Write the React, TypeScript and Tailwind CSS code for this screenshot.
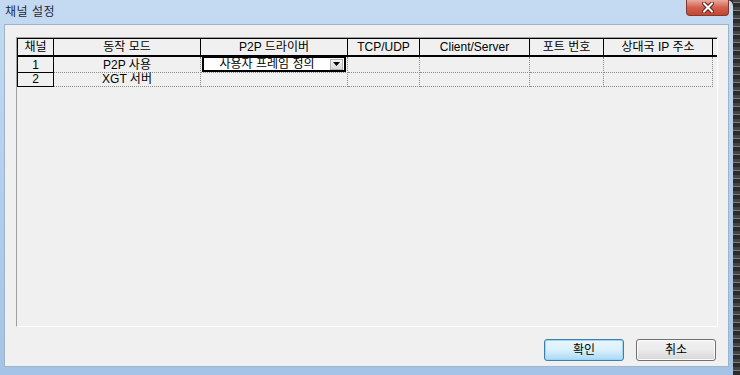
import React from 'react';

const font = "font-['Liberation_Sans','Noto_Sans_CJK_KR',sans-serif]";

const headers = ['채널', '동작 모드', 'P2P 드라이버', 'TCP/UDP', 'Client/Server', '포트 번호', '상대국 IP 주소'];

const rows = [
  { ch: '1', mode: 'P2P 사용', driver: true },
  { ch: '2', mode: 'XGT 서버', driver: false },
];

const gridCols = 'grid grid-cols-[37px_147px_147px_72px_110px_74px_109px]';

function Dropdown() {
  return (
    <div className="h-[16px] -mt-[1px] ml-[1px] mr-[1px] flex items-center border-2 border-black bg-white">
      <span className="flex-1 text-center leading-none text-black">사용자 프레임 정의</span>
      <span className="w-[13px] h-[11px] mr-[1px] flex items-center justify-center bg-gradient-to-b from-[#f4f4f4] to-[#d8d8d8] border border-[#b0b0b0]">
        <svg width="7" height="4" viewBox="0 0 7 4">
          <path d="M0 0 H7 L3.5 4 Z" fill="#000" />
        </svg>
      </span>
    </div>
  );
}

function Button({ label, primary }: { label: string; primary?: boolean }) {
  return (
    <button
      className={`w-[80px] h-[22px] rounded-[3px] border text-[12px] text-black flex items-center justify-center bg-gradient-to-b ${
        primary
          ? 'border-[#3c7fb1] from-[#eaf6fd] via-[#d9f0fc] to-[#a7d9f5] shadow-[inset_0_0_0_1px_#9fd4f4]'
          : 'border-[#707070] from-[#f2f2f2] via-[#ebebeb] to-[#d5d5d5] shadow-[inset_0_0_0_1px_#fcfcfc]'
      }`}
    >
      {label}
    </button>
  );
}

export default function App() {
  return (
    <div className={`w-[740px] h-[375px] flex overflow-hidden bg-[#2f2f2f] ${font}`}>
      {/* window */}
      <div className="w-[733px] h-full flex flex-col bg-gradient-to-b from-[#c4daf1] via-[#b3cfee] to-[#a4c3e6] rounded-tr-[6px]">
        <div className="h-[24px] relative flex items-center pl-[5px]">
          <span className="text-[12px] text-[#1b2a3c] tracking-[0.5px]">채널 설정</span>
          <div className="absolute right-[4px] top-0 w-[43px] h-[16px] rounded-b-[4px] border border-t-0 border-[#7d3a32] bg-gradient-to-b from-[#e9a99d] via-[#d2604f] to-[#c7432f] flex items-center justify-center">
            <svg width="12" height="11" viewBox="0 0 12 11">
              <path d="M2 1.5 L10 9.5 M10 1.5 L2 9.5" stroke="#5a1d16" strokeWidth="4" strokeLinecap="square" />
              <path d="M2 1.5 L10 9.5 M10 1.5 L2 9.5" stroke="#ffffff" strokeWidth="2" strokeLinecap="square" />
            </svg>
          </div>
        </div>

        {/* client area */}
        <div className="flex-1 ml-[4px] mr-[4px] mb-[8px] bg-[#f0f0f0] border border-[#9fb3ca] flex flex-col">
          <div className="pt-[12px] pl-[11px]">
            <div className="w-[702px] h-[290px] border border-t-[#a0a0a0] border-l-[#a0a0a0] border-r-white border-b-white text-[12px] text-black">
              {/* header */}
              <div className={`${gridCols} h-[19px] border-t border-b-2 border-black`}>
                {headers.map((h, i) => (
                  <div
                    key={h}
                    className={`flex items-center justify-center border-r border-black leading-none ${i === 0 ? 'border-l' : ''}`}
                  >
                    {h}
                  </div>
                ))}
              </div>
              {/* rows */}
              {rows.map((r) => (
                <div key={r.ch} className={`${gridCols} h-[15px]`}>
                  <div className="flex items-center justify-center border-l border-r border-b border-black leading-none">
                    {r.ch}
                  </div>
                  <div className="flex items-center justify-center border-r border-b border-dotted border-[#8a8a8a] leading-none">
                    {r.mode}
                  </div>
                  <div className="border-r border-b border-dotted border-[#8a8a8a]">
                    {r.driver ? <Dropdown /> : null}
                  </div>
                  {[0, 1, 2, 3].map((k) => (
                    <div key={k} className="border-r border-b border-dotted border-[#8a8a8a]" />
                  ))}
                </div>
              ))}
            </div>
          </div>
          <div className="mt-[12px] pr-[12px] flex justify-end gap-[12px]">
            <Button label="확인" primary />
            <Button label="취소" />
          </div>
        </div>
      </div>
      {/* background behind window */}
      <div className="flex-1 h-full bg-[repeating-linear-gradient(0deg,#2c2c2c_0px,#2c2c2c_4px,#7c7c7c_4px,#7c7c7c_5px,#444_5px,#444_8px)]" />
    </div>
  );
}
